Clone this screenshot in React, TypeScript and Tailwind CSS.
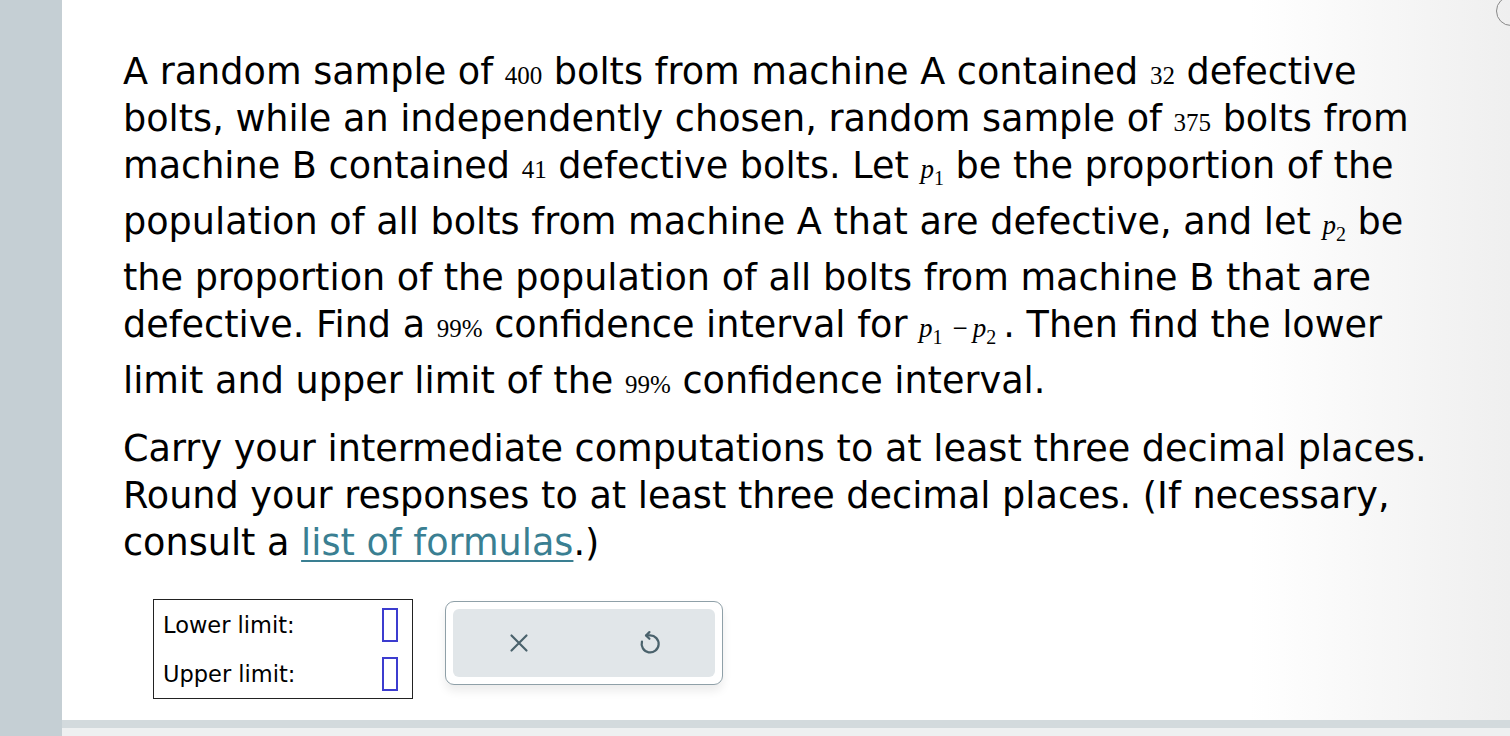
import React from "react";

function Num({children}: {children: React.ReactNode}) {
    return <span className="font-['Liberation_Serif',serif] text-[25px] leading-none">{children}</span>;
}

function Sub({children}: {children: React.ReactNode}) {
    return <span className="relative top-[7px] text-[20px]">{children}</span>;
}

function P({n}: {n: string}) {
    return (
        <span className="inline-block pb-[15px] font-['Liberation_Serif',serif] text-[27px] leading-none">
            <i>p</i>
            <Sub>{n}</Sub>
        </span>
    );
}

function AnswerBox() {
    return (
        <div className="w-[260px] h-[100px] border-[1.5px] border-[#222] bg-white flex flex-col justify-center gap-[13px] pl-[9px] pr-[14px] text-[22.5px] leading-[36px]">
            <div className="flex items-center justify-between">
                <span>Lower limit:</span>
                <span className="w-[16px] h-[34px] border-2 border-[#3c3ccf]"></span>
            </div>
            <div className="flex items-center justify-between">
                <span>Upper limit:</span>
                <span className="w-[16px] h-[34px] border-2 border-[#3c3ccf]"></span>
            </div>
        </div>
    );
}

function ActionButtons() {
    return (
        <div className="w-[278px] h-[84px] mt-[2px] rounded-[9px] border border-[#8fa0a8] bg-white p-[7px] shadow-[0_6px_10px_rgba(0,0,0,0.08)]">
            <div className="w-full h-full rounded-[6px] bg-[#e1e6e9] flex items-center">
                <button className="w-1/2 h-full flex items-center justify-center">
                    <svg width="20" height="20" viewBox="0 0 20 20" fill="none" stroke="#4a626c" strokeWidth="2.2" strokeLinecap="round">
                        <path d="M2.5 2.5 L17.5 17.5 M17.5 2.5 L2.5 17.5" />
                    </svg>
                </button>
                <button className="w-1/2 h-full flex items-center justify-center">
                    <svg width="26" height="26" viewBox="0 0 22 22" fill="none" stroke="#4a626c" strokeWidth="1.9" strokeLinecap="round" strokeLinejoin="round">
                        <path d="M10.5 1.8 L7.6 4.6 L10.5 7.4" />
                        <path d="M8 4.6 H11 A7.2 7.2 0 1 1 4.2 9.8" />
                    </svg>
                </button>
            </div>
        </div>
    );
}

export default function App() {
    return (
        <div className="relative w-[1510px] h-[736px] overflow-hidden flex font-['DejaVu_Sans',sans-serif] text-black">
            <div className="w-[62px] h-full bg-[#c5cfd4] shrink-0"></div>
            <div className="flex-1 flex flex-col">
                <div className="h-[720px] bg-linear-to-r from-white from-[82%] to-[#efefef] pl-[61px] pt-[48px]">
                    <div className="w-[1312px] text-[36.6px] leading-[47px]">
                        <p>
                            A random sample of <Num>400</Num> bolts from machine A contained <Num>32</Num> defective bolts, while an independently chosen, random sample of <Num>375</Num> bolts from machine B contained <Num>41</Num> defective bolts. Let <P n="1" /> be the proportion of the population of all bolts from machine A that are defective, and let <P n="2" /> be the proportion of the population of all bolts from machine B that are defective. Find a <Num>99%</Num> confidence interval for{" "}
                            <span className="inline-block pb-[15px] font-['Liberation_Serif',serif] text-[27px] leading-none">
                                <i>p</i><Sub>1</Sub>
                                <span className="ml-[10px] mr-[5px]">−</span>
                                <i>p</i><Sub>2</Sub>
                            </span>
                            <span className="ml-[7px]">.</span> Then find the lower limit and upper limit of the <Num>99%</Num> confidence interval.
                        </p>
                        <p className="mt-[21px]">
                            Carry your intermediate computations to at least three decimal places. Round your responses to at least three decimal places. (If necessary, consult a <a href="#" className="text-[#3a7f92] underline decoration-[2px] underline-offset-[5px]">list of formulas</a>.)
                        </p>
                    </div>
                    <div className="flex items-start gap-[32px] mt-[33px] ml-[30px]">
                        <AnswerBox />
                        <ActionButtons />
                    </div>
                </div>
                <div className="h-[8px] bg-[#d3dadd]"></div>
                <div className="flex-1 bg-[#eef0f1]"></div>
            </div>
            <div className="absolute right-[-16px] top-[-4px] w-[30px] h-[30px] rounded-full border-[1.5px] border-[#888]"></div>
        </div>
    );
}
